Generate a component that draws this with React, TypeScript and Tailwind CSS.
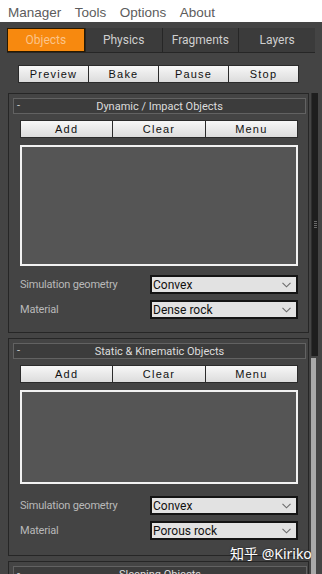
import React from 'react';

// Simulation toolbar panel (RayFire-style), dark 3ds Max look
const UI_FONT = "font-['Roboto','Noto_Sans',sans-serif]";
const BTN_FONT = "font-['Liberation_Sans','Arial',sans-serif]";

const GrayButton = ({ label, className = '' }: { label: string; className?: string }) => (
  <div
    className={`flex items-center justify-center h-full bg-gradient-to-b from-[#f7f7f7] to-[#dcdcdc] border border-[#2b2b2b] text-[11px] tracking-[1.2px] text-[#111] ${BTN_FONT} ${className}`}
  >
    {label}
  </div>
);

const Dropdown = ({ value }: { value: string }) => (
  <div className="w-[148px] h-[19px] flex items-center justify-between bg-[#e2e2e2] border-2 border-[#141414] pl-[1px] pr-[4px]">
    <span className={`text-[12px] text-[#111] leading-none ${UI_FONT}`}>{value}</span>
    <svg width="9" height="6" viewBox="0 0 9 6" className="mr-[1px]">
      <path d="M0.5 0.8 L4.5 4.8 L8.5 0.8" fill="none" stroke="#6b6b6b" strokeWidth="1.1" />
    </svg>
  </div>
);

const PanelHeader = ({ title }: { title: string }) => (
  <div className={`relative h-[16px] ml-[4px] mr-[1px] flex items-center justify-center bg-[#3c3c3c] border border-[#626262] text-[11px] text-[#dcdcdc] ${UI_FONT}`}>
    <span className="absolute left-[3px] top-[-1px] text-[11px] text-[#cfcfcf]">-</span>
    <span className="leading-none">{title}</span>
  </div>
);

const Label = ({ text }: { text: string }) => (
  <span className={`text-[11px] tracking-[-0.2px] text-[#b9b9b9] leading-none ${UI_FONT}`}>{text}</span>
);

const ObjectPanel = ({
  title,
  listHeight,
  material,
  topGap,
  bottomGap,
}: {
  title: string;
  listHeight: string;
  material: string;
  topGap: string;
  bottomGap: string;
}) => (
  <div className="border border-[#262626] bg-[#444444] pt-[4px] pr-[1px] ml-[8px] w-[301px]">
    <PanelHeader title={title} />
    <div className="pl-[11px] pr-[9px]">
      <div className="flex h-[18px] mt-[6px]">
        <GrayButton label="Add" className="flex-1" />
        <GrayButton label="Clear" className="flex-1 border-l-0" />
        <GrayButton label="Menu" className="flex-1 border-l-0" />
      </div>
      <div className={`${listHeight} mt-[7px] bg-[#555555] border-2 border-[#f2f2f2]`} />
      <div className={`flex items-center justify-between h-[19px] ${topGap}`}>
        <Label text="Simulation geometry" />
        <Dropdown value="Convex" />
      </div>
      <div className="flex items-center justify-between h-[19px] mt-[6px]">
        <Label text="Material" />
        <Dropdown value={material} />
      </div>
      <div className={bottomGap} />
    </div>
  </div>
);

export default function App() {
  const tabs = ['Objects', 'Physics', 'Fragments', 'Layers'];
  const actions = ['Preview', 'Bake', 'Pause', 'Stop'];

  return (
    <div className="relative w-[322px] h-[574px] overflow-hidden bg-[#444444]">
      {/* Menu bar */}
      <div className="h-[22px] bg-white flex items-center pt-[4px] pl-[8px] gap-[13.5px] text-[13.5px] leading-none text-[#5c5c5c] font-['Liberation_Sans','Arial',sans-serif]">
        <span>Manager</span>
        <span>Tools</span>
        <span>Options</span>
        <span>About</span>
      </div>

      {/* Tabs */}
      <div className="mt-[6px] ml-[7px] w-[308px] h-[25px] flex bg-[#3a3a3a] border-b border-[#262626]">
        {tabs.map((t, i) => (
          <div
            key={t}
            className={`flex-1 flex items-center justify-center text-[12px] ${UI_FONT} ${
              i === 0
                ? 'bg-[#f7890f] text-[#fbc48a] border border-[#2a1a00]'
                : 'bg-[#3b3b3b] text-[#cfcfcf] border-l border-[#262626]'
            }`}
          >
            {t}
          </div>
        ))}
      </div>

      {/* Playback buttons */}
      <div className="mt-[12px] ml-[18px] w-[281px] h-[18px] flex">
        {actions.map((a, i) => (
          <GrayButton key={a} label={a} className={`flex-1 ${i > 0 ? 'border-l-0' : ''}`} />
        ))}
      </div>

      {/* Scroll area */}
      <div className="flex mt-[10px]">
        <div className="w-[311px] flex flex-col gap-[5px]">
          <ObjectPanel
            title="Dynamic / Impact Objects"
            listHeight="h-[121px]"
            material="Dense rock"
            topGap="mt-[9px]"
            bottomGap="h-[13px]"
          />
          <ObjectPanel
            title="Static & Kinematic Objects"
            listHeight="h-[94px]"
            material="Porous rock"
            topGap="mt-[12px]"
            bottomGap="h-[15px]"
          />
          <div className="border border-[#262626] bg-[#444444] pt-[4px] ml-[8px] w-[301px] h-[40px]">
            <PanelHeader title="Sleeping Objects" />
          </div>
        </div>
        <div className="w-[11px] flex flex-col">
          <div className="relative w-[7px] h-[263px] bg-[#1e1e1e] border-l border-[#2e2e2e]">
            <div className="absolute left-[2px] top-[128px] w-[3px] flex flex-col gap-[1px]">
              <div className="h-px bg-[#6a6a6a]" />
              <div className="h-px bg-[#6a6a6a]" />
              <div className="h-px bg-[#6a6a6a]" />
              <div className="h-px bg-[#6a6a6a]" />
            </div>
          </div>
          <div className="w-[5px] h-[240px] mt-[2px] bg-[#a9a9a9]" />
        </div>
      </div>

      {/* Watermark */}
      <div className="absolute left-[230px] top-[543px] text-[14px] text-white font-['Noto_Sans','Noto_Sans_CJK_SC',sans-serif] [text-shadow:0_0_2px_rgba(0,0,0,0.6)]">
        知乎 @Kiriko
      </div>
    </div>
  );
}
